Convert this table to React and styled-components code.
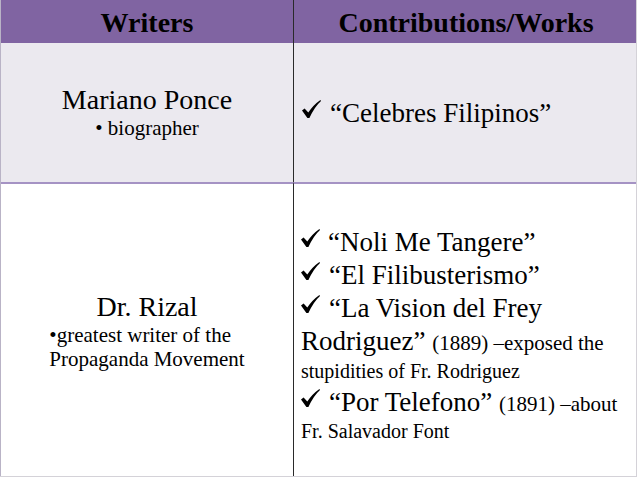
import React from "react";
import styled, { createGlobalStyle } from "styled-components";

const Global = createGlobalStyle`
  html, body { margin: 0; padding: 0; background: #ffffff; }
  body { font-family: 'Liberation Serif', 'Times New Roman', Tinos, 'DejaVu Serif', serif; color: #000; }
`;

const Table = styled.div`
  width: 638px;
  height: 478px;
  box-sizing: border-box;
  display: grid;
  grid-template-columns: 292px 1fr;
  grid-template-rows: 43px 139px 1fr;
  font-family: 'Liberation Serif', 'Times New Roman', Tinos, 'DejaVu Serif', serif;
  border-left: 1px solid #b9b3c6;
  position: relative;
  &::after {
    content: "";
    position: absolute;
    left: -1px;
    top: 0;
    width: 638px;
    height: 478px;
    box-sizing: border-box;
    border-right: 2px solid #ffffff;
    border-bottom: 1px solid #ffffff;
    pointer-events: none;
  }
  &::before {
    content: "";
    position: absolute;
    left: -1px;
    top: 0;
    width: 637px;
    height: 477px;
    box-sizing: border-box;
    border-right: 1px solid #d4d2d8;
    border-bottom: 1px solid #d4d2d8;
    pointer-events: none;
    z-index: 1;
  }
`;

const HeadCell = styled.div`
  background: #8064a2;
  display: flex;
  align-items: center;
  justify-content: center;
  font-weight: bold;
  font-size: 28px;
  line-height: 1;
  padding-top: 2px;
  border-left: ${(p) => (p.$divider ? "1px solid #2a2a2a" : "none")};
`;

const Cell = styled.div`
  background: ${(p) => (p.$shaded ? "#ebe9ef" : "#ffffff")};
  border-left: ${(p) => (p.$divider ? "1px solid #2a2a2a" : "none")};
  border-top: ${(p) => (p.$topLine ? "2px solid #a593c4" : "none")};
  display: flex;
  flex-direction: column;
  justify-content: center;
  align-items: ${(p) => (p.$center ? "center" : "flex-start")};
  padding: ${(p) => p.$pad || "0"};
  box-sizing: border-box;
`;

const WriterBlock = styled.div`
  text-align: ${(p) => p.$align || "center"};
`;

const Name = styled.div`
  font-size: 28px;
  line-height: ${(p) => p.$lh || "30px"};
  text-align: center;
`;

const Note = styled.div`
  font-size: 21px;
  line-height: ${(p) => p.$lh || "24px"};
  white-space: nowrap;
`;

const Line = styled.div`
  font-size: ${(p) => (p.$small ? "20px" : "27px")};
  line-height: ${(p) => p.$lh}px;
  white-space: nowrap;
`;

const Small = styled.span`
  font-size: 21px;
  line-height: 1;
`;

const CheckSvg = styled.svg`
  width: 19px;
  height: 18px;
  vertical-align: ${(p) => p.$lift || "4px"};
  margin-right: ${(p) => p.$gap || "9px"};
`;

function Check({ gap, lift }) {
  return (
    <CheckSvg viewBox="0 0 19 18" $gap={gap} $lift={lift}>
      <path
        d="M0 10.6 L2.6 8.4 L6.3 12.6 Q11 5.2 18.4 0 L19 0.9 Q12.6 6.6 7.4 18 L5.4 18 Z"
        fill="#000"
      />
    </CheckSvg>
  );
}

export default function App() {
  return (
    <>
      <Global />
      <Table>
        <HeadCell>Writers</HeadCell>
        <HeadCell $divider>Contributions/Works</HeadCell>

        <Cell $shaded $center>
          <WriterBlock>
            <Name $lh="32px">Mariano Ponce</Name>
            <Note $lh="25px">• biographer</Note>
          </WriterBlock>
        </Cell>
        <Cell $shaded $divider $pad="0 0 0 8px">
          <Line $lh={36}>
            <Check />“Celebres Filipinos”
          </Line>
        </Cell>

        <Cell $topLine $center>
          <WriterBlock $align="left">
            <Name $lh="32px">Dr. Rizal</Name>
            <Note $lh="24px">•greatest writer of the</Note>
            <Note $lh="24px">Propaganda Movement</Note>
          </WriterBlock>
        </Cell>
        <Cell $topLine $divider $pad="6px 0 0 7px">
          <Line $lh={33}>
            <Check gap="8px" />“Noli Me Tangere”
          </Line>
          <Line $lh={33}>
            <Check />“El Filibusterismo”
          </Line>
          <Line $lh={33}>
            <Check />“La Vision del Frey
          </Line>
          <Line $lh={33}>
            Rodriguez” <Small>(1889) –exposed the</Small>
          </Line>
          <Line $small $lh={27}>
            stupidities of Fr. Rodriguez
          </Line>
          <Line $lh={34}>
            <Check />“Por Telefono” <Small>(1891) –about</Small>
          </Line>
          <Line $small $lh={24}>
            Fr. Salavador Font
          </Line>
        </Cell>
      </Table>
    </>
  );
}
